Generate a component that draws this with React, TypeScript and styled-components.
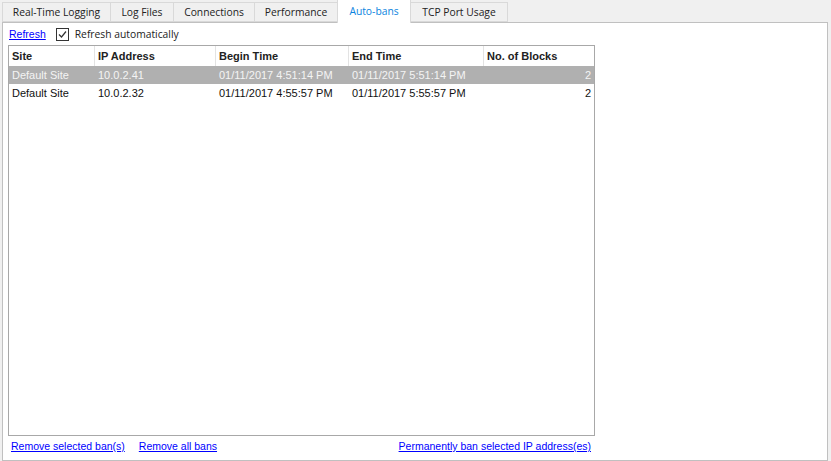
import { useState } from "react";
import styled, { createGlobalStyle } from "styled-components";

const tabs = [
  { label: "Real-Time Logging", width: 109 },
  { label: "Log Files", width: 64 },
  { label: "Connections", width: 82 },
  { label: "Performance", width: 84 },
  { label: "Auto-bans", width: 74 },
  { label: "TCP Port Usage", width: 98 },
];

const columns = [
  { title: "Site", width: 86 },
  { title: "IP Address", width: 121 },
  { title: "Begin Time", width: 133 },
  { title: "End Time", width: 135 },
  { title: "No. of Blocks", width: 110 },
];

const bans = [
  { site: "Default Site", ip: "10.0.2.41", begin: "01/11/2017 4:51:14 PM", end: "01/11/2017 5:51:14 PM", blocks: 2 },
  { site: "Default Site", ip: "10.0.2.32", begin: "01/11/2017 4:55:57 PM", end: "01/11/2017 5:55:57 PM", blocks: 2 },
];

const GlobalStyle = createGlobalStyle`
  body {
    margin: 0;
    background: #f0f0f0;
    font-family: "Liberation Sans", Arial, sans-serif;
  }
`;

export default function App() {
  const [active, setActive] = useState(4);
  const [selected, setSelected] = useState(0);
  const [auto, setAuto] = useState(true);

  return (
    <>
      <GlobalStyle />
      <Window>
        <TabStrip>
          {tabs.map((tab, index) => (
            <Tab
              key={tab.label}
              $active={index === active}
              $width={tab.width}
              onClick={() => setActive(index)}
            >
              {tab.label}
            </Tab>
          ))}
        </TabStrip>
        <Panel>
          <Toolbar>
            <LinkText>Refresh</LinkText>
            <CheckLabel onClick={() => setAuto(!auto)}>
              <CheckBox>
                {auto && (
                  <svg width="9" height="9" viewBox="0 0 9 9">
                    <path d="M1 4.5 L3.5 7 L8 1.5" fill="none" stroke="#333" strokeWidth="1.2" />
                  </svg>
                )}
              </CheckBox>
              Refresh automatically
            </CheckLabel>
          </Toolbar>
          <Grid>
            <HeaderRow>
              {columns.map((col) => (
                <HeaderCell key={col.title} $width={col.width}>
                  {col.title}
                </HeaderCell>
              ))}
            </HeaderRow>
            {bans.map((ban, index) => (
              <Row key={ban.ip} $selected={index === selected} onClick={() => setSelected(index)}>
                <Cell $width={columns[0].width}>{ban.site}</Cell>
                <Cell $width={columns[1].width}>{ban.ip}</Cell>
                <Cell $width={columns[2].width}>{ban.begin}</Cell>
                <Cell $width={columns[3].width}>{ban.end}</Cell>
                <Cell $width={columns[4].width} $right>
                  {ban.blocks}
                </Cell>
              </Row>
            ))}
          </Grid>
          <Footer>
            <FooterLeft>
              <LinkText>Remove selected ban(s)</LinkText>
              <LinkText>Remove all bans</LinkText>
            </FooterLeft>
            <LinkText>Permanently ban selected IP address(es)</LinkText>
          </Footer>
        </Panel>
      </Window>
    </>
  );
}

const Window = styled.div`
  width: 831px;
  height: 461px;
  display: flex;
  flex-direction: column;
  box-sizing: border-box;
  padding: 0 3px 0 2px;
`;

const TabStrip = styled.div`
  display: flex;
  align-items: flex-end;
  height: 22px;
  position: relative;
  z-index: 1;
`;

const Tab = styled.div<{ $active?: boolean; $width: number }>`
  box-sizing: border-box;
  width: ${({ $width }) => $width}px;
  height: ${({ $active }) => ($active ? 24 : 20)}px;
  margin-bottom: ${({ $active }) => ($active ? -1 : 0)}px;
  margin-left: -1px;
  &:first-child {
    margin-left: 0;
  }
  display: flex;
  align-items: center;
  justify-content: center;
  padding-bottom: ${({ $active }) => ($active ? 2 : 0)}px;
  font-family: "Open Sans", "Noto Sans", sans-serif;
  font-size: 10.3px;
  color: ${({ $active }) => ($active ? "#0a84e0" : "#222")};
  background: ${({ $active }) => ($active ? "#fff" : "#f0f0f0")};
  border: 1px solid #d9d9d9;
  border-top: 1px solid ${({ $active }) => ($active ? "#0a84e0" : "#d9d9d9")};
  border-bottom: ${({ $active }) => ($active ? "none" : "1px solid #d9d9d9")};
  cursor: default;
  white-space: nowrap;
`;

const Panel = styled.div`
  flex: 1;
  box-sizing: border-box;
  background: #fff;
  border: 1px solid #c0c0c0;
  padding: 3px 5px 7px 5px;
  display: flex;
  flex-direction: column;
`;

const Toolbar = styled.div`
  display: flex;
  align-items: center;
  gap: 10px;
  height: 16px;
  margin-bottom: 3px;
  padding-left: 1px;
`;

const LinkText = styled.span`
  color: #0000ff;
  text-decoration: underline;
  font-size: 10.5px;
  cursor: pointer;
  white-space: nowrap;
`;

const CheckLabel = styled.label`
  display: flex;
  align-items: center;
  gap: 6px;
  color: #222;
  font-family: "Open Sans", "Noto Sans", sans-serif;
  font-size: 10.3px;
  cursor: default;
`;

const CheckBox = styled.span`
  box-sizing: border-box;
  width: 13px;
  height: 13px;
  border: 1px solid #333;
  background: #fff;
  display: flex;
  align-items: center;
  justify-content: center;
`;

const Grid = styled.div`
  box-sizing: border-box;
  width: 587px;
  height: 391px;
  border: 1px solid #a8a8a8;
  background: #fff;
  font-size: 11px;
`;

const HeaderRow = styled.div`
  display: flex;
  height: 20px;
`;

const HeaderCell = styled.div<{ $width: number }>`
  box-sizing: border-box;
  width: ${({ $width }) => $width}px;
  padding-left: 3px;
  display: flex;
  align-items: center;
  font-weight: bold;
  color: #222;
  border-right: 1px solid #e3e3e3;
  &:last-child {
    border-right: none;
  }
`;

const Row = styled.div<{ $selected?: boolean }>`
  display: flex;
  height: 18px;
  background: ${({ $selected }) => ($selected ? "#b0b0b0" : "#fff")};
  color: ${({ $selected }) => ($selected ? "#f4f4f4" : "#111")};
`;

const Cell = styled.div<{ $width: number; $right?: boolean }>`
  box-sizing: border-box;
  width: ${({ $width }) => $width}px;
  padding: 0 3px 0 3px;
  display: flex;
  align-items: center;
  justify-content: ${({ $right }) => ($right ? "flex-end" : "flex-start")};
  white-space: nowrap;
  overflow: hidden;
`;

const Footer = styled.div`
  width: 587px;
  display: flex;
  justify-content: space-between;
  align-items: center;
  margin-top: 4px;
  padding: 0 4px 0 3px;
  box-sizing: border-box;
`;

const FooterLeft = styled.div`
  display: flex;
  gap: 14px;
`;
